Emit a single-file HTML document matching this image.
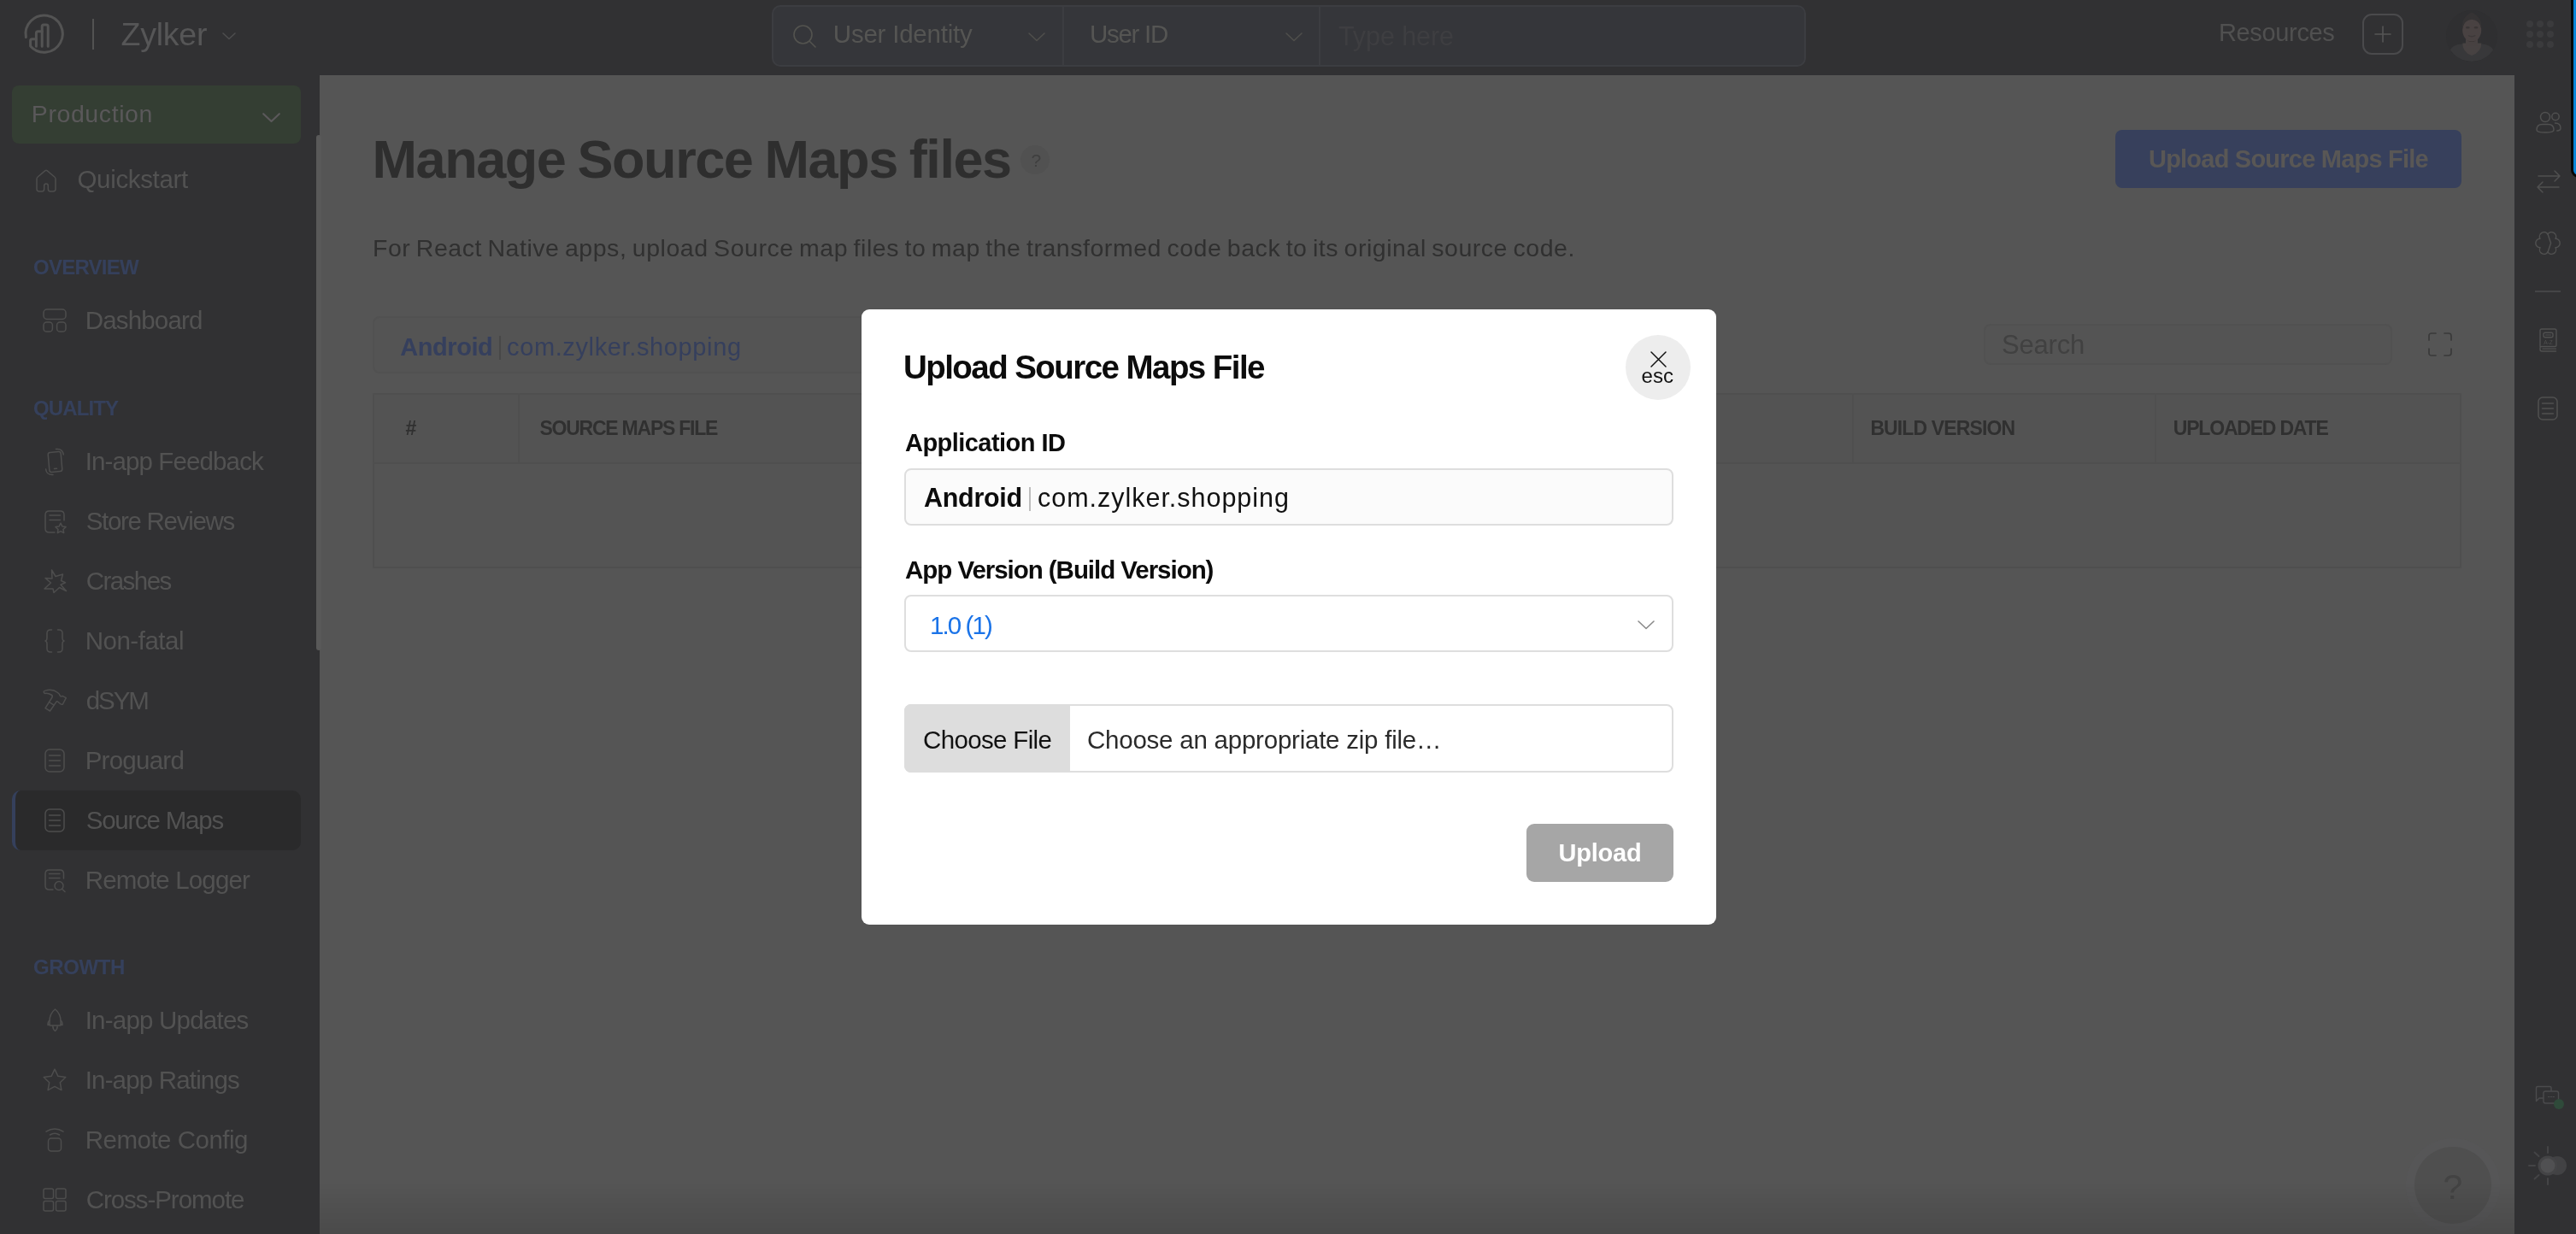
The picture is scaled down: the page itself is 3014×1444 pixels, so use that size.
<!DOCTYPE html>
<html lang="en">
<head>
<meta charset="utf-8">
<title>Manage Source Maps files</title>
<style>
html{font-size:calc(100vw / 30.14)}
*{margin:0;padding:0;box-sizing:border-box}
html,body{width:30.14rem;height:14.44rem;overflow:hidden;background:#555555}
body{font-family:"Liberation Sans",Arial,sans-serif;position:relative;color:#111}
.bx,.t,.ic,.bx>div{position:absolute;display:block}
.bx{border:0;background:none;font:inherit;color:inherit;text-align:left}
body>.bx{will-change:transform}
.t{white-space:nowrap;line-height:1;font-weight:400;text-decoration:none;font-style:normal}
.ic{line-height:0;font-style:normal}
.ic svg{display:block;overflow:visible}
.topbar,.side,.rbar{background:#313133}
.content{background:#555555}
.gsearch{background:#35363a;border:0.02rem solid #3c3d41;border-radius:0.1rem}
.plusbtn{border:0.02rem solid #4a4a4c;border-radius:0.11rem}
.prod{background:#343e33;border-radius:0.08rem}
.upbtn{background:#37405c;border-radius:0.08rem}
.appsel{border:0.02rem solid #515151;border-radius:0.08rem;background:#545454}
.search{border:0.02rem solid #515151;border-radius:0.08rem;background:#545454}
.table{border:0.02rem solid #4f4f4f;background:#545454}
.modal{background:#ffffff;border-radius:0.09rem}
.close{background:#ededed;border-radius:50%}
.field{border:0.02rem solid #dedede;border-radius:0.08rem;background:#fff}
.field.ro{background:#fbfbfb}
.upload{background:#a6a6a6;border-radius:0.09rem}
.edge{position:absolute;left:30.08rem;top:-0.04rem;width:0.12rem;height:2.12rem;background:#0a86d8;border:0.03rem solid #050505;border-radius:0 0 0 0.09rem}
.shade{position:absolute;left:3.74rem;bottom:0;width:25.68rem;height:0.6rem;background:linear-gradient(to bottom,rgba(0,0,0,0),rgba(0,0,0,.12));pointer-events:none}
</style>
</head>
<body>
<header class="bx topbar" style="left:0;top:0;width:30.14rem;height:0.88rem" >
<i class="ic logo" style="left:0.28rem;top:0.16rem;color:#535353"><svg style="width:0.48rem;height:0.48rem" viewBox="0 0 48 48" fill="none" stroke="currentColor" stroke-width="3" stroke-linecap="round" stroke-linejoin="round" ><path d="M2.4 27.6 A21.6 21.6 0 1 1 7.6 38.1 V31.7 Q7.6 29.7 9.6 29.7 H14.4"/><path d="M14.4 38.2 V22.7 Q14.4 20.7 16.4 20.7 H21.2"/><path d="M21.2 38.2 V15 Q21.2 13 23.2 13 H26.2 Q28.2 13 28.2 15 V38.2"/></svg></i>
<div class="vbar" style="left:1.08rem;top:0.22rem;width:0.02rem;height:0.36rem;background:#525252"></div>
<span class="t" style="left:1.415rem;top:0.215rem;font-size:0.375rem;letter-spacing:-0.0022rem;color:#565657;">Zylker</span>
<i class="ic" style="left:2.595rem;top:0.38rem;color:#4e4e4f;"><svg style="width:0.16rem;height:0.09rem" viewBox="0 0 16 9" fill="none" stroke="currentColor" stroke-width="1.5" stroke-linecap="round" stroke-linejoin="round" ><path d="M1 1 L8 7.5 L15 1"/></svg></i>
<form class="bx gsearch" style="left:9.03rem;top:0.06rem;width:12.1rem;height:0.72rem" role="search">
<div class="sep" style="left:3.38rem;top:0;width:0.02rem;height:0.68rem;background:#3c3d41"></div>
<div class="sep" style="left:6.38rem;top:0;width:0.02rem;height:0.68rem;background:#3c3d41"></div>
<i class="ic" style="left:0.225rem;top:0.205rem;color:#53534f;"><svg style="width:0.27rem;height:0.27rem" viewBox="0 0 27 27" fill="none" stroke="currentColor" stroke-width="1.6" stroke-linecap="round" stroke-linejoin="round" ><circle cx="11.5" cy="11.5" r="10.5"/><path d="M19.2 19.2 L26 26"/></svg></i>
<span class="t" style="left:0.698rem;top:0.17rem;font-size:0.295rem;letter-spacing:-0.0022rem;color:#555553;">User Identity</span>
<i class="ic" style="left:2.98rem;top:0.295rem;color:#4f4f4c;"><svg style="width:0.2rem;height:0.11rem" viewBox="0 0 20 11" fill="none" stroke="currentColor" stroke-width="1.6" stroke-linecap="round" stroke-linejoin="round" ><path d="M1 1 L10 9.5 L19 1"/></svg></i>
<span class="t" style="left:3.7rem;top:0.17rem;font-size:0.295rem;letter-spacing:-0.0128rem;color:#555553;">User ID</span>
<i class="ic" style="left:5.985rem;top:0.295rem;color:#4f4f4c;"><svg style="width:0.2rem;height:0.11rem" viewBox="0 0 20 11" fill="none" stroke="currentColor" stroke-width="1.6" stroke-linecap="round" stroke-linejoin="round" ><path d="M1 1 L10 9.5 L19 1"/></svg></i>
<span class="t" style="left:6.61rem;top:0.185rem;font-size:0.305rem;letter-spacing:-0.0008rem;color:#3e3e41;">Type here</span>
</form>
<span class="t" style="left:25.96rem;top:0.24rem;font-size:0.29rem;letter-spacing:-0.0035rem;color:#505050;">Resources</span>
<button class="bx plusbtn" style="left:27.64rem;top:0.16rem;width:0.48rem;height:0.48rem" type="button" aria-label="Create">
<i class="ic" style="left:0.12rem;top:0.12rem;color:#565656;"><svg style="width:0.2rem;height:0.2rem" viewBox="0 0 20 20" fill="none" stroke="currentColor" stroke-width="1.6" stroke-linecap="round" stroke-linejoin="round" ><path d="M10 1 V19 M1 10 H19"/></svg></i>
</button>
<i class="ic" style="left:28.62rem;top:0.12rem"><svg style="width:0.6rem;height:0.6rem" viewBox="0 0 60 60"><defs><clipPath id="av"><circle cx="30" cy="30" r="30"/></clipPath></defs><circle cx="30" cy="30" r="30" fill="#2f2f31"/><g clip-path="url(#av)"><path d="M4.5 47 Q7 40.5 18 39.5 L42 39.5 Q53 40.5 55.5 47 Q52 58 30 60 Q8 58 4.5 47 Z" fill="#38383a"/><path d="M19.3 38.5 L41.3 38.5 Q41.5 49 30 53 Q18.8 49 19.3 38.5 Z" fill="#474242"/><path d="M23 30 H37 V42 H23 Z" fill="#474141"/><ellipse cx="30.2" cy="23.3" rx="11" ry="13.6" fill="#494242"/><path d="M19 22 Q17.5 8 30 2.6 Q42.5 8 41.3 22 Q39.5 11.5 30 10.8 Q20.8 11.5 19 22 Z" fill="#353334"/><ellipse cx="25.3" cy="20.2" rx="2.4" ry="1.3" fill="#393535"/><ellipse cx="35" cy="20.2" rx="2.4" ry="1.3" fill="#393535"/><path d="M26 29.5 Q30 32 34.2 29.5" fill="none" stroke="#3d3838" stroke-width="1.3"/><path d="M25 35.5 Q30 38.5 35 35.5 Q30 37 25 35.5Z" fill="#3a3636"/></g></svg></i>
<i class="ic" style="left:29.56rem;top:0.24rem;color:#3b3b3d"><svg style="width:0.32rem;height:0.32rem" viewBox="0 0 32 32" fill="currentColor"><circle cx="4" cy="4" r="4"/><circle cx="4" cy="16" r="4"/><circle cx="4" cy="28" r="4"/><circle cx="16" cy="4" r="4"/><circle cx="16" cy="16" r="4"/><circle cx="16" cy="28" r="4"/><circle cx="28" cy="4" r="4"/><circle cx="28" cy="16" r="4"/><circle cx="28" cy="28" r="4"/></svg></i>
</header>
<nav class="bx side" style="left:0;top:0.88rem;width:3.74rem;height:13.56rem" >
<button class="bx prod" style="left:0.14rem;top:0.12rem;width:3.38rem;height:0.68rem" type="button">
<span class="t" style="left:0.228rem;top:0.19rem;font-size:0.285rem;letter-spacing:0.0059rem;color:#5a585a;">Production</span>
<i class="ic" style="left:2.93rem;top:0.315rem;color:#5b595b;"><svg style="width:0.21rem;height:0.12rem" viewBox="0 0 21 12" fill="none" stroke="currentColor" stroke-width="2.2" stroke-linecap="round" stroke-linejoin="round" ><path d="M1.2 1.2 L10.5 10 L19.8 1.2"/></svg></i>
</button>
<i class="ic" style="left:0.42rem;top:1.095rem;color:#4d4d4d;"><svg style="width:0.24rem;height:0.27rem" viewBox="0 0 24 27" fill="none" stroke="currentColor" stroke-width="1.5" stroke-linecap="round" stroke-linejoin="round" ><path d="M1 11.5 Q1 10 2.2 9 L11 1.6 Q12 0.8 13 1.6 L21.8 9 Q23 10 23 11.5 V23 Q23 26 20 26 H17 Q14.3 26 14.3 23 V19.5 Q14.3 17 12 17 Q9.7 17 9.7 19.5 V23 Q9.7 26 7 26 H4 Q1 26 1 23 Z"/></svg></i>
<a class="t" style="left:0.905rem;top:1.07rem;font-size:0.295rem;letter-spacing:-0.0034rem;color:#525252;">Quickstart</a>
<h6 class="t" style="left:0.39rem;top:2.13rem;font-size:0.24rem;letter-spacing:-0.0075rem;font-weight:700;color:#35405c;">OVERVIEW</h6>
<i class="ic" style="left:0.5rem;top:2.725rem;color:#4d4d4d;"><svg style="width:0.28rem;height:0.28rem" viewBox="0 0 28 28" fill="none" stroke="currentColor" stroke-width="1.5" stroke-linecap="round" stroke-linejoin="round" ><rect x="1" y="1" width="26" height="11.5" rx="4"/><rect x="1" y="16" width="10.4" height="11" rx="3.6"/><rect x="16.6" y="16" width="10.4" height="11" rx="3.6"/></svg></i>
<a class="t" style="left:0.997rem;top:2.715rem;font-size:0.295rem;letter-spacing:-0.0083rem;color:#525252;">Dashboard</a>
<h6 class="t" style="left:0.39rem;top:3.775rem;font-size:0.24rem;letter-spacing:-0.0089rem;font-weight:700;color:#35405c;">QUALITY</h6>
<i class="ic" style="left:0.51rem;top:4.355rem;color:#4d4d4d;"><svg style="width:0.26rem;height:0.33rem" viewBox="0 0 26 33" fill="none" stroke="currentColor" stroke-width="1.5" stroke-linecap="round" stroke-linejoin="round" ><rect x="6" y="5" width="15" height="23" rx="2.5" transform="rotate(-5 13.5 16.5)"/><path d="M12.5 24.6 l3 -0.3"/><path d="M14.5 1.6 Q22 0.5 23.3 8"/><path d="M2.6 25 Q3.5 32 11 31.5"/></svg></i>
<a class="t" style="left:0.997rem;top:4.365rem;font-size:0.295rem;letter-spacing:-0.0088rem;color:#525252;">In-app Feedback</a>
<i class="ic" style="left:0.515rem;top:5.085rem;color:#4d4d4d;"><svg style="width:0.27rem;height:0.28rem" viewBox="0 0 27 28" fill="none" stroke="currentColor" stroke-width="1.5" stroke-linecap="round" stroke-linejoin="round" ><path d="M12 26 H5.5 Q1 26 1 21.5 V5.5 Q1 1 5.5 1 H18.5 Q23 1 23 5.5 V12"/><path d="M6 6 H18.5 M6 11.5 H18.5"/><path d="M19 15.2 l1.9 3.8 4.1 .6 -3 2.9 .7 4.1 -3.7 -2 -3.7 2 .7 -4.1 -3 -2.9 4.1 -.6 Z"/></svg></i>
<a class="t" style="left:1.007rem;top:5.065rem;font-size:0.295rem;letter-spacing:-0.013rem;color:#525252;">Store Reviews</a>
<i class="ic" style="left:0.505rem;top:5.78rem;color:#4d4d4d;"><svg style="width:0.28rem;height:0.28rem" viewBox="0 0 28 28" fill="none" stroke="currentColor" stroke-width="1.5" stroke-linecap="round" stroke-linejoin="round" ><path d="M9.5 1 L14 8.5 L22.5 6 L20.5 13.5 L25.5 15.8 L20 18.2 L26.5 25.5 L18.5 21.5 L12 27.5 L11 23 L1 23 L8.5 16 L2 10.5 L10 11 Z"/></svg></i>
<a class="t" style="left:1.007rem;top:5.765rem;font-size:0.295rem;letter-spacing:-0.0155rem;color:#525252;">Crashes</a>
<i class="ic" style="left:0.52rem;top:6.48rem;color:#4d4d4d;"><svg style="width:0.24rem;height:0.28rem" viewBox="0 0 24 28" fill="none" stroke="currentColor" stroke-width="1.5" stroke-linecap="round" stroke-linejoin="round" ><path d="M8.5 1 H7 Q3 1 3 5 V10.5 Q3 13.5 1 14 Q3 14.5 3 17.5 V23 Q3 27 7 27 H8.5"/><path d="M15.5 1 H17 Q21 1 21 5 V10.5 Q21 13.5 23 14 Q21 14.5 21 17.5 V23 Q21 27 17 27 H15.5"/></svg></i>
<a class="t" style="left:0.997rem;top:6.465rem;font-size:0.295rem;letter-spacing:-0.0048rem;color:#525252;">Non-fatal</a>
<i class="ic" style="left:0.5rem;top:7.18rem;color:#4d4d4d;"><svg style="width:0.28rem;height:0.28rem" viewBox="0 0 28 28" fill="none" stroke="currentColor" stroke-width="1.5" stroke-linecap="round" stroke-linejoin="round" ><path d="M1.5 4.5 Q0.5 3.2 2.5 2.4 Q11 -0.5 17.5 4.5 Q19.5 6 20.5 8.4 Q21.5 9.5 23 8.4 L27.3 10.7 L23.5 18 Q22 18.8 20.5 17.5 L17.8 15.2 Q16.6 14.2 15.8 15.4 L8.5 26 L3 22.6 L11 10 Q12 8.2 10 7 Q6.5 5 2.8 5.4 Q1.8 5.3 1.5 4.5 Z"/><path d="M7.5 15.5 L13 19.2"/></svg></i>
<a class="t" style="left:1.007rem;top:7.165rem;font-size:0.295rem;letter-spacing:-0.0207rem;color:#525252;">dSYM</a>
<i class="ic" style="left:0.52rem;top:7.88rem;color:#4d4d4d;"><svg style="width:0.24rem;height:0.28rem" viewBox="0 0 24 28" fill="none" stroke="currentColor" stroke-width="1.5" stroke-linecap="round" stroke-linejoin="round" ><rect x="1" y="1" width="22" height="26" rx="5"/><path d="M5.5 8 H18.5 M5.5 14 H18.5 M5.5 20 H18.5"/></svg></i>
<a class="t" style="left:0.997rem;top:7.865rem;font-size:0.295rem;letter-spacing:-0.0074rem;color:#525252;">Proguard</a>
<div class="active" style="left:0.14rem;top:8.37rem;width:3.38rem;height:0.7rem;background:#2a2a2b;border-radius:0.1rem;border-left:0.04rem solid #35405c;box-sizing:border-box"></div>
<i class="ic" style="left:0.52rem;top:8.58rem;color:#4d4d4d;"><svg style="width:0.24rem;height:0.28rem" viewBox="0 0 24 28" fill="none" stroke="currentColor" stroke-width="1.5" stroke-linecap="round" stroke-linejoin="round" ><rect x="1" y="1" width="22" height="26" rx="5"/><path d="M5.5 8 H18.5 M5.5 14 H18.5 M5.5 20 H18.5"/></svg></i>
<a class="t" style="left:1.007rem;top:8.565rem;font-size:0.295rem;letter-spacing:-0.0123rem;color:#525252;">Source Maps</a>
<i class="ic" style="left:0.52rem;top:9.285rem;color:#4d4d4d;"><svg style="width:0.25rem;height:0.28rem" viewBox="0 0 25 28" fill="none" stroke="currentColor" stroke-width="1.5" stroke-linecap="round" stroke-linejoin="round" ><path d="M10 24 H5.5 Q1 24 1 19.5 V5.5 Q1 1 5.5 1 H18 Q22.5 1 22.5 5.5 V11"/><path d="M5.5 5.5 H18 M5.5 10.5 H18"/><circle cx="17" cy="19.5" r="5"/><path d="M20.8 23.5 L24 26.5"/></svg></i>
<a class="t" style="left:0.997rem;top:9.265rem;font-size:0.295rem;letter-spacing:-0.0085rem;color:#525252;">Remote Logger</a>
<h6 class="t" style="left:0.39rem;top:10.32rem;font-size:0.24rem;letter-spacing:-0.004rem;font-weight:700;color:#35405c;">GROWTH</h6>
<i class="ic" style="left:0.545rem;top:10.92rem;color:#4d4d4d;"><svg style="width:0.19rem;height:0.28rem" viewBox="0 0 19 28" fill="none" stroke="currentColor" stroke-width="1.5" stroke-linecap="round" stroke-linejoin="round" ><path d="M9.5 1 Q16 6 16 15 V20 H3 V15 Q3 6 9.5 1 Z"/><path d="M3 14 Q0.8 15.5 1 19.5 L3 18.5"/><path d="M16 14 Q18.2 15.5 18 19.5 L16 18.5"/><path d="M6.8 20.5 Q6.8 24.5 9.5 26.5 Q12.2 24.5 12.2 20.5"/></svg></i>
<a class="t" style="left:0.997rem;top:10.905rem;font-size:0.295rem;letter-spacing:-0.0078rem;color:#525252;">In-app Updates</a>
<i class="ic" style="left:0.5rem;top:11.62rem;color:#4d4d4d;"><svg style="width:0.28rem;height:0.27rem" viewBox="0 0 28 27" fill="none" stroke="currentColor" stroke-width="1.5" stroke-linecap="round" stroke-linejoin="round" ><path d="M14 1.2 L17.9 9.3 L26.8 10.5 L20.3 16.7 L21.9 25.6 L14 21.3 L6.1 25.6 L7.7 16.7 L1.2 10.5 L10.1 9.3 Z"/></svg></i>
<a class="t" style="left:0.997rem;top:11.605rem;font-size:0.295rem;letter-spacing:-0.0083rem;color:#525252;">In-app Ratings</a>
<i class="ic" style="left:0.53rem;top:12.32rem;color:#4d4d4d;"><svg style="width:0.22rem;height:0.28rem" viewBox="0 0 22 28" fill="none" stroke="currentColor" stroke-width="1.5" stroke-linecap="round" stroke-linejoin="round" ><rect x="3.5" y="12" width="15" height="15" rx="3.5"/><path d="M5.5 8 Q11 4.5 16.5 8"/><path d="M1 4.2 Q11 -2 21 4.2"/></svg></i>
<a class="t" style="left:0.997rem;top:12.305rem;font-size:0.295rem;letter-spacing:-0.005rem;color:#525252;">Remote Config</a>
<i class="ic" style="left:0.5rem;top:13.02rem;color:#4d4d4d;"><svg style="width:0.28rem;height:0.28rem" viewBox="0 0 28 28" fill="none" stroke="currentColor" stroke-width="1.5" stroke-linecap="round" stroke-linejoin="round" ><rect x="1" y="1" width="11.5" height="11.5" rx="2"/><rect x="15.5" y="1" width="11.5" height="11.5" rx="2"/><rect x="1" y="15.5" width="11.5" height="11.5" rx="2"/><rect x="15.5" y="15.5" width="11.5" height="11.5" rx="2"/></svg></i>
<a class="t" style="left:1.007rem;top:13.005rem;font-size:0.295rem;letter-spacing:-0.0105rem;color:#525252;">Cross-Promote</a>
</nav>
<main class="bx content" style="left:3.74rem;top:0.88rem;width:25.68rem;height:13.56rem" >
<div class="thumb" style="left:-0.04rem;top:0.7rem;width:0.06rem;height:6.03rem;background:#595959;border-radius:0.03rem"></div>
<h1 class="t" style="left:0.615rem;top:0.67rem;font-size:0.63rem;letter-spacing:-0.0144rem;word-spacing:-0.02rem;font-weight:700;color:#2e2e2e;">Manage Source Maps files</h1>
<div class="help" style="left:8.2rem;top:0.82rem;width:0.34rem;height:0.34rem;background:#515151;border-radius:50%"></div>
<span class="t" style="left:8.325rem;top:0.886rem;font-size:0.21rem;color:#3f3f3f;">?</span>
<p class="t" style="left:0.62rem;top:1.88rem;font-size:0.285rem;letter-spacing:0.0054rem;word-spacing:-0.02rem;color:#303030;">For React Native apps, upload Source map files to map the transformed code back to its original source code.</p>
<button class="bx upbtn" style="left:21.01rem;top:0.64rem;width:4.05rem;height:0.68rem" type="button">
<span class="t" style="left:0.39rem;top:0.2rem;font-size:0.29rem;letter-spacing:-0.0078rem;font-weight:700;color:#595755;">Upload Source Maps File</span>
</button>
<div class="bx appsel" style="left:0.62rem;top:2.82rem;width:7rem;height:0.67rem" >
<span class="t" style="left:0.303rem;top:0.195rem;font-size:0.29rem;letter-spacing:-0.0045rem;font-weight:700;color:#353f5d;">Android</span>
<div class="sep" style="left:1.46rem;top:0.21rem;width:0.02rem;height:0.28rem;background:#484848"></div>
<span class="t" style="left:1.55rem;top:0.195rem;font-size:0.29rem;letter-spacing:0.0063rem;color:#353f5d;">com.zylker.shopping</span>
</div>
<div class="bx search" style="left:19.47rem;top:2.91rem;width:4.78rem;height:0.48rem" >
<span class="t" style="left:0.19rem;top:0.074rem;font-size:0.31rem;letter-spacing:-0.002rem;color:#414141;">Search</span>
</div>
<i class="ic" style="left:24.67rem;top:3.01rem;color:#3a3a3a;"><svg style="width:0.28rem;height:0.28rem" viewBox="0 0 28 28" fill="none" stroke="currentColor" stroke-width="1.7" stroke-linecap="round" stroke-linejoin="round" ><path d="M1 9 V4 Q1 1 4 1 H9 M19 1 H24 Q27 1 27 4 V9 M27 19 V24 Q27 27 24 27 H19 M9 27 H4 Q1 27 1 24 V19"/></svg></i>
<div class="bx table" style="left:0.62rem;top:3.72rem;width:24.44rem;height:2.05rem" role="table">
<div class="thead" style="left:0;top:0;width:24.4rem;height:0.81rem;border-bottom:0.02rem solid #4f4f4f;box-sizing:border-box;background:#535353"></div>
<div class="sep" style="left:1.68rem;top:0;width:0.02rem;height:0.79rem;background:#4f4f4f"></div>
<div class="sep" style="left:17.29rem;top:0;width:0.02rem;height:0.79rem;background:#4f4f4f"></div>
<div class="sep" style="left:20.83rem;top:0;width:0.02rem;height:0.79rem;background:#4f4f4f"></div>
<span class="t" style="left:0.365rem;top:0.28rem;font-size:0.23rem;letter-spacing:-0.01rem;font-weight:700;color:#303030;">#</span>
<span class="t" style="left:1.935rem;top:0.28rem;font-size:0.23rem;letter-spacing:-0.0124rem;font-weight:700;color:#303030;">SOURCE MAPS FILE</span>
<span class="t" style="left:17.504rem;top:0.28rem;font-size:0.23rem;letter-spacing:-0.0088rem;font-weight:700;color:#303030;">BUILD VERSION</span>
<span class="t" style="left:21.048rem;top:0.28rem;font-size:0.23rem;letter-spacing:-0.012rem;font-weight:700;color:#303030;">UPLOADED DATE</span>
</div>
<div class="fab" style="left:24.51rem;top:12.54rem;width:0.9rem;height:0.9rem;background:#4f4f4f;border-radius:50%;box-shadow:0 0 0 0.1rem rgba(90,90,92,.35)"></div>
<span class="t" style="left:24.845rem;top:12.81rem;font-size:0.41rem;color:#434343;">?</span>
</main>
<aside class="bx rbar" style="left:29.42rem;top:0.88rem;width:0.72rem;height:13.56rem" >
<i class="ic" style="left:0.245rem;top:0.42rem;color:#505050;"><svg style="width:0.3rem;height:0.26rem" viewBox="0 0 30 26" fill="none" stroke="currentColor" stroke-width="1.45" stroke-linecap="round" stroke-linejoin="round" ><circle cx="11" cy="7" r="5.5"/><path d="M1 22 Q1 15.5 7.5 15.5 H14.5 Q21 15.5 21 22 Q21 25 11 25 Q1 25 1 22 Z"/><circle cx="23" cy="6.5" r="4.2"/><path d="M22.5 14 Q29 14 29 20 Q29 22.8 24.8 23"/></svg></i>
<i class="ic" style="left:0.245rem;top:1.11rem;color:#505050;"><svg style="width:0.3rem;height:0.27rem" viewBox="0 0 30 27" fill="none" stroke="currentColor" stroke-width="1.45" stroke-linecap="round" stroke-linejoin="round" ><path d="M3 7 H28 M22 1 L28 7 L22 13"/><path d="M27 20 H2 M8 14 L2 20 L8 26"/></svg></i>
<i class="ic" style="left:0.24rem;top:1.825rem;color:#505050;"><svg style="width:0.3rem;height:0.27rem" viewBox="0 0 30 27" fill="none" stroke="currentColor" stroke-width="1.45" stroke-linecap="round" stroke-linejoin="round" ><path d="M15.0 3.1 A5.2 5.2 0 0 1 24.0 8.3 A5.2 5.2 0 0 1 24.0 18.7 A5.2 5.2 0 0 1 15.0 23.9 A5.2 5.2 0 0 1 6.0 18.7 A5.2 5.2 0 0 1 6.0 8.3 A5.2 5.2 0 0 1 15.0 3.1 Z"/><path d="M15.0 3.1 L18.6 13.5 L15.0 23.9"/></svg></i>
<div class="hr" style="left:0.24rem;top:2.52rem;width:0.3rem;height:0.02rem;background:#454547"></div>
<i class="ic" style="left:0.285rem;top:2.96rem;color:#505050;"><svg style="width:0.21rem;height:0.28rem" viewBox="0 0 21 28" fill="none" stroke="currentColor" stroke-width="1.4" stroke-linecap="round" stroke-linejoin="round" ><path d="M1 21.5 V3 Q1 1 3 1 H18 Q20 1 20 3 V20 Q20 21.5 18.5 21.5 H2.5 Q1 21.5 1 23 V25 Q1 27 3 27 H19.5"/><rect x="5" y="5.2" width="11" height="5.6" rx="2"/><path d="M7.5 8 H13.5 M4 24.2 H19.5" stroke-width="1.2"/><text x="10.5" y="18.6" font-family="Liberation Sans, sans-serif" font-size="6.5" text-anchor="middle" fill="currentColor" stroke="none">A-Z</text></svg></i>
<i class="ic" style="left:0.27rem;top:3.76rem;color:#505050;"><svg style="width:0.24rem;height:0.28rem" viewBox="0 0 24 28" fill="none" stroke="currentColor" stroke-width="1.5" stroke-linecap="round" stroke-linejoin="round" ><rect x="1" y="1" width="22" height="26" rx="5"/><path d="M5.5 8 H18.5 M5.5 14 H18.5 M5.5 20 H18.5"/></svg></i>
<i class="ic" style="left:0.24rem;top:11.82rem;color:#4b4b4d;"><svg style="width:0.29rem;height:0.22rem" viewBox="0 0 29 22" fill="none" stroke="currentColor" stroke-width="1.45" stroke-linecap="round" stroke-linejoin="round" ><path d="M9.5 15 H5 L1.5 18.5 V3 Q1.5 1.5 3 1.5 H17.5 Q19 1.5 19 3 V6.5"/><rect x="10" y="7" width="17.5" height="14" rx="2.2"/><path d="M15.5 13.5 h1.3 M18.3 13.5 h1.3 M21.1 13.5 h1.3" stroke-width="1.2"/></svg></i>
<div class="dot" style="left:0.46rem;top:11.98rem;width:0.12rem;height:0.12rem;background:#2f4a3a;border-radius:50%"></div>
<i class="ic" style="left:0.16rem;top:12.53rem"><svg style="width:0.46rem;height:0.46rem" viewBox="0 0 46 46" fill="none" stroke="#444446" stroke-width="2" stroke-linecap="round"><path d="M23 1 V8 M23 38 V45 M1 23 H8 M7.5 7.5 L12.5 12 M7.5 38.5 L12.5 34"/><circle cx="34" cy="23" r="11" fill="#424244" stroke="none"/><circle cx="23" cy="23" r="10" fill="#505052" stroke="#444446" stroke-width="3"/></svg></i>
</aside>
<section class="bx modal" style="left:10.08rem;top:3.62rem;width:10rem;height:7.2rem" role="dialog" aria-modal="true">
<h2 class="t" style="left:0.49rem;top:0.485rem;font-size:0.385rem;letter-spacing:-0.0156rem;font-weight:700;color:#0c0c0c;">Upload Source Maps File</h2>
<button class="bx close" style="left:8.94rem;top:0.3rem;width:0.76rem;height:0.76rem" type="button" aria-label="Close">
<i class="ic" style="left:0.285rem;top:0.185rem;color:#111;"><svg style="width:0.19rem;height:0.19rem" viewBox="0 0 19 19" fill="none" stroke="currentColor" stroke-width="1.5" stroke-linecap="round" stroke-linejoin="round" ><path d="M1 1 L18 18 M18 1 L1 18"/></svg></i>
<span class="t" style="left:0.185rem;top:0.355rem;font-size:0.24rem;letter-spacing:0.0008rem;color:#111;">esc</span>
</button>
<label class="t" style="left:0.51rem;top:1.42rem;font-size:0.29rem;letter-spacing:-0.0054rem;font-weight:700;color:#0c0c0c;">Application ID</label>
<div class="bx field ro" style="left:0.5rem;top:1.86rem;width:9rem;height:0.67rem" >
<span class="t" style="left:0.21rem;top:0.165rem;font-size:0.305rem;letter-spacing:-0.0029rem;font-weight:700;color:#0c0c0c;">Android</span>
<div class="sep" style="left:1.44rem;top:0.2rem;width:0.02rem;height:0.28rem;background:#bdbdbd"></div>
<span class="t" style="left:1.54rem;top:0.165rem;font-size:0.305rem;letter-spacing:0.0098rem;color:#111;">com.zylker.shopping</span>
</div>
<label class="t" style="left:0.51rem;top:2.9rem;font-size:0.295rem;letter-spacing:-0.0104rem;font-weight:700;color:#0c0c0c;">App Version (Build Version)</label>
<div class="bx field" style="left:0.5rem;top:3.34rem;width:9rem;height:0.67rem" role="combobox">
<span class="t" style="left:0.28rem;top:0.19rem;font-size:0.295rem;letter-spacing:-0.0191rem;color:#1a73e8;">1.0 (1)</span>
<i class="ic" style="left:8.56rem;top:0.275rem;color:#8a8a8a;"><svg style="width:0.2rem;height:0.11rem" viewBox="0 0 20 11" fill="none" stroke="currentColor" stroke-width="1.6" stroke-linecap="round" stroke-linejoin="round" ><path d="M1 1 L10 9.5 L19 1"/></svg></i>
</div>
<div class="bx field file" style="left:0.5rem;top:4.62rem;width:9rem;height:0.8rem" >
<div class="choose" style="left:-0.02rem;top:-0.02rem;width:1.94rem;height:0.8rem;background:#dddddd;border-radius:0.08rem 0 0 0.08rem"></div>
<span class="t" style="left:0.2rem;top:0.25rem;font-size:0.295rem;letter-spacing:-0.0065rem;color:#111;">Choose File</span>
<span class="t" style="left:2.12rem;top:0.25rem;font-size:0.295rem;letter-spacing:-0.0023rem;color:#2b2b2b;">Choose an appropriate zip file…</span>
</div>
<button class="bx upload" style="left:7.78rem;top:6.02rem;width:1.72rem;height:0.68rem" type="button" disabled>
<span class="t" style="left:0.375rem;top:0.195rem;font-size:0.29rem;letter-spacing:-0.0021rem;font-weight:700;color:#ffffff;">Upload</span>
</button>
</section>
<div class="edge"></div>
<div class="shade"></div>
</body>
</html>
